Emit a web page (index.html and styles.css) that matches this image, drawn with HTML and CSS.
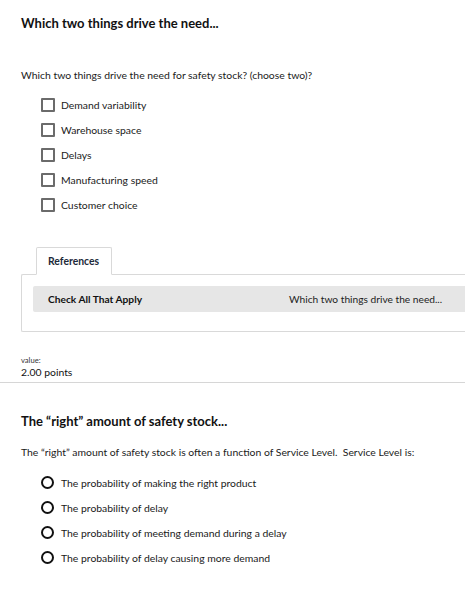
FILE: index.html
```html
<!DOCTYPE html>
<html>
<head>
<meta charset="utf-8">
<link rel="stylesheet" href="styles.css">
</head>
<body>
<div class="page">
  <section class="question">
    <h2 class="q-title">Which two things drive the need...</h2>
    <p class="q-text">Which two things drive the need for safety stock? (choose two)?</p>
    <ul class="options">
      <li class="option"><span class="checkbox"></span><span>Demand variability</span></li>
      <li class="option"><span class="checkbox"></span><span>Warehouse space</span></li>
      <li class="option"><span class="checkbox"></span><span>Delays</span></li>
      <li class="option"><span class="checkbox"></span><span>Manufacturing speed</span></li>
      <li class="option"><span class="checkbox"></span><span>Customer choice</span></li>
    </ul>
    <div class="refs">
      <div class="tabs"><div class="tab">References</div></div>
      <div class="panel">
        <div class="ref-row">
          <span class="ref-type">Check All That Apply</span>
          <span class="ref-name">Which two things drive the need...</span>
        </div>
      </div>
    </div>
    <div class="value">
      <div class="value-label">value:</div>
      <div class="value-points">2.00 points</div>
    </div>
  </section>
  <section class="question second">
    <h2 class="q-title medium">The “right” amount of safety stock...</h2>
    <p class="q-text">The “right” amount of safety stock is often a function of Service Level.&nbsp; Service Level is:</p>
    <ul class="options">
      <li class="option"><span class="radio"></span><span>The probability of making the right product</span></li>
      <li class="option"><span class="radio"></span><span>The probability of delay</span></li>
      <li class="option"><span class="radio"></span><span>The probability of meeting demand during a delay</span></li>
      <li class="option"><span class="radio"></span><span>The probability of delay causing more demand</span></li>
    </ul>
  </section>
</div>
</body>
</html>
```
FILE: styles.css
```css
html, body {
  margin: 0;
  padding: 0;
  background: #ffffff;
}
body {
  font-family: Lato, "Liberation Sans", sans-serif;
  color: #1a1a1a;
  width: 465px;
  overflow: hidden;
}
.page {
  width: 465px;
}
.question {
  padding: 0 0 0 21px;
}
.q-title {
  margin: 0;
  padding-top: 15px;
  font-size: 13px;
  font-weight: 700;
  line-height: 16px;
  color: #111;
}
.q-text {
  margin: 0;
  padding-top: 37px;
  font-size: 10.4px;
  line-height: 14px;
  color: #1a1a1a;
}
.second .q-title {
  padding-top: 30px;
}
.second .q-text {
  padding-top: 16px;
}
.options {
  list-style: none;
  margin: 10px 0 0 0;
  padding: 0 0 0 20px;
}
.second .options {
  margin-top: 11px;
}
.option {
  display: flex;
  align-items: center;
  height: 25px;
  font-size: 10.4px;
  color: #1a1a1a;
}
.checkbox {
  width: 10px;
  height: 10px;
  border: 2px solid #6b6b6b;
  border-radius: 1px;
  margin-right: 6px;
  flex: none;
}
.radio {
  width: 9px;
  height: 9px;
  border: 2px solid #111;
  border-radius: 50%;
  margin-right: 7px;
  flex: none;
}
.refs {
  margin-top: 30px;
}
.tabs {
  display: flex;
  padding-left: 15px;
  margin-bottom: -1px;
}
.tab {
  width: 76px;
  height: 28px;
  border: 1px solid #d9d9d9;
  border-bottom: 1px solid #fff;
  border-radius: 2px 2px 0 0;
  background: #fff;
  font-size: 10.4px;
  font-weight: 700;
  color: #1d2a3a;
  display: flex;
  align-items: center;
  padding-left: 11px;
  box-sizing: border-box;
  position: relative;
  z-index: 1;
}
.panel {
  border: 1px solid #d9d9d9;
  border-right: none;
  border-radius: 2px 0 0 2px;
  height: 58px;
  padding: 11px 0 0 11px;
  box-sizing: border-box;
}
.ref-row {
  background: #e6e6e6;
  height: 26px;
  display: flex;
  align-items: center;
  border-radius: 2px 0 0 2px;
  font-size: 10.2px;
}
.ref-type {
  font-weight: 700;
  padding-left: 15px;
  width: 241px;
  color: #111;
}
.ref-name {
  color: #222;
}
.value {
  padding-top: 23px;
  padding-bottom: 3px;
}
.value-label {
  font-size: 7.6px;
  line-height: 11px;
  color: #333;
}
.value-points {
  font-size: 10.4px;
  line-height: 13px;
  color: #111;
}
.second {
  border-top: 1px solid #d6d6d6;
}
```
